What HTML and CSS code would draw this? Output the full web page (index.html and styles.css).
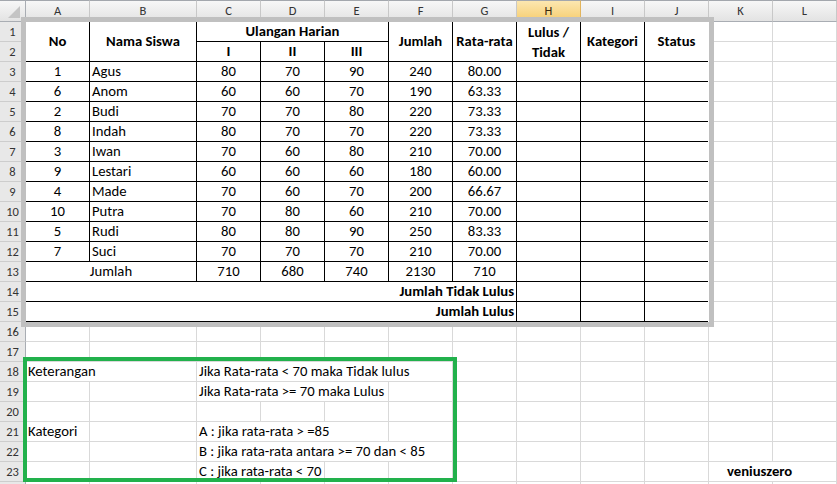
FILE: index.html
```html
<!DOCTYPE html>
<html>
<head>
<meta charset="utf-8">
<link rel="stylesheet" href="styles.css">
</head>
<body>
<div class="sheet">
  <!-- column headers -->
  <div class="ch corner"><svg width="25" height="20" viewBox="0 0 25 20"><polygon points="8,17 20,17 20,5" fill="#c4c4c4"/></svg></div>
  <div class="ch">A</div><div class="ch">B</div><div class="ch">C</div><div class="ch">D</div><div class="ch">E</div><div class="ch">F</div><div class="ch">G</div><div class="ch sel">H</div><div class="ch">I</div><div class="ch">J</div><div class="ch">K</div><div class="ch">L</div>

  <!-- embedded table picture -->
  <div class="pic">
    <div class="t b h2">No</div>
    <div class="t b h2">Nama Siswa</div>
    <div class="t b span3">Ulangan Harian</div>
    <div class="t b h2">Jumlah</div>
    <div class="t b h2">Rata-rata</div>
    <div class="t b h2 wrap">Lulus /<br>Tidak</div>
    <div class="t b h2">Kategori</div>
    <div class="t b h2 last">Status</div>
    <div class="t b">I</div><div class="t b">II</div><div class="t b">III</div>

    <div class="t">1</div><div class="t l">Agus</div><div class="t">80</div><div class="t">70</div><div class="t">90</div><div class="t">240</div><div class="t">80.00</div><div class="t"></div><div class="t"></div><div class="t last"></div>
    <div class="t">6</div><div class="t l">Anom</div><div class="t">60</div><div class="t">60</div><div class="t">70</div><div class="t">190</div><div class="t">63.33</div><div class="t"></div><div class="t"></div><div class="t last"></div>
    <div class="t">2</div><div class="t l">Budi</div><div class="t">70</div><div class="t">70</div><div class="t">80</div><div class="t">220</div><div class="t">73.33</div><div class="t"></div><div class="t"></div><div class="t last"></div>
    <div class="t">8</div><div class="t l">Indah</div><div class="t">80</div><div class="t">70</div><div class="t">70</div><div class="t">220</div><div class="t">73.33</div><div class="t"></div><div class="t"></div><div class="t last"></div>
    <div class="t">3</div><div class="t l">Iwan</div><div class="t">70</div><div class="t">60</div><div class="t">80</div><div class="t">210</div><div class="t">70.00</div><div class="t"></div><div class="t"></div><div class="t last"></div>
    <div class="t">9</div><div class="t l">Lestari</div><div class="t">60</div><div class="t">60</div><div class="t">60</div><div class="t">180</div><div class="t">60.00</div><div class="t"></div><div class="t"></div><div class="t last"></div>
    <div class="t">4</div><div class="t l">Made</div><div class="t">70</div><div class="t">60</div><div class="t">70</div><div class="t">200</div><div class="t">66.67</div><div class="t"></div><div class="t"></div><div class="t last"></div>
    <div class="t">10</div><div class="t l">Putra</div><div class="t">70</div><div class="t">80</div><div class="t">60</div><div class="t">210</div><div class="t">70.00</div><div class="t"></div><div class="t"></div><div class="t last"></div>
    <div class="t">5</div><div class="t l">Rudi</div><div class="t">80</div><div class="t">80</div><div class="t">90</div><div class="t">250</div><div class="t">83.33</div><div class="t"></div><div class="t"></div><div class="t last"></div>
    <div class="t">7</div><div class="t l">Suci</div><div class="t">70</div><div class="t">70</div><div class="t">70</div><div class="t">210</div><div class="t">70.00</div><div class="t"></div><div class="t"></div><div class="t last"></div>
    <div class="t span2">Jumlah</div><div class="t">710</div><div class="t">680</div><div class="t">740</div><div class="t">2130</div><div class="t">710</div><div class="t"></div><div class="t"></div><div class="t last"></div>
    <div class="t b r span7">Jumlah Tidak Lulus</div><div class="t"></div><div class="t"></div><div class="t last"></div>
    <div class="t b r span7">Jumlah Lulus</div><div class="t"></div><div class="t"></div><div class="t last"></div>
  </div>

  <!-- rows 1-15: row headers + K, L -->
  <div class="rh">1</div><div class="c"></div><div class="c"></div>
  <div class="rh">2</div><div class="c"></div><div class="c"></div>
  <div class="rh">3</div><div class="c"></div><div class="c"></div>
  <div class="rh">4</div><div class="c"></div><div class="c"></div>
  <div class="rh">5</div><div class="c"></div><div class="c"></div>
  <div class="rh">6</div><div class="c"></div><div class="c"></div>
  <div class="rh">7</div><div class="c"></div><div class="c"></div>
  <div class="rh">8</div><div class="c"></div><div class="c"></div>
  <div class="rh">9</div><div class="c"></div><div class="c"></div>
  <div class="rh">10</div><div class="c"></div><div class="c"></div>
  <div class="rh">11</div><div class="c"></div><div class="c"></div>
  <div class="rh">12</div><div class="c"></div><div class="c"></div>
  <div class="rh">13</div><div class="c"></div><div class="c"></div>
  <div class="rh">14</div><div class="c"></div><div class="c"></div>
  <div class="rh">15</div><div class="c"></div><div class="c"></div>

  <!-- row 16 -->
  <div class="rh">16</div><div class="c"></div><div class="c"></div><div class="c"></div><div class="c"></div><div class="c"></div><div class="c"></div><div class="c"></div><div class="c"></div><div class="c"></div><div class="c"></div><div class="c"></div><div class="c"></div>
  <!-- row 17 -->
  <div class="rh">17</div><div class="c"></div><div class="c"></div><div class="c"></div><div class="c"></div><div class="c"></div><div class="c"></div><div class="c"></div><div class="c"></div><div class="c"></div><div class="c"></div><div class="c"></div><div class="c"></div>
  <!-- row 18 -->
  <div class="rh">18</div><div class="c span2">Keterangan</div><div class="c span4">Jika Rata-rata &lt; 70 maka Tidak lulus</div><div class="c"></div><div class="c"></div><div class="c"></div><div class="c"></div><div class="c"></div><div class="c"></div>
  <!-- row 19 -->
  <div class="rh">19</div><div class="c"></div><div class="c"></div><div class="c span3">Jika Rata-rata &gt;= 70 maka Lulus</div><div class="c"></div><div class="c"></div><div class="c"></div><div class="c"></div><div class="c"></div><div class="c"></div><div class="c"></div>
  <!-- row 20 -->
  <div class="rh">20</div><div class="c"></div><div class="c"></div><div class="c"></div><div class="c"></div><div class="c"></div><div class="c"></div><div class="c"></div><div class="c"></div><div class="c"></div><div class="c"></div><div class="c"></div><div class="c"></div>
  <!-- row 21 -->
  <div class="rh">21</div><div class="c">Kategori</div><div class="c"></div><div class="c span3">A : jika rata-rata &gt; =85</div><div class="c"></div><div class="c"></div><div class="c"></div><div class="c"></div><div class="c"></div><div class="c"></div><div class="c"></div>
  <!-- row 22 -->
  <div class="rh">22</div><div class="c"></div><div class="c"></div><div class="c span4">B : jika rata-rata antara &gt;= 70 dan &lt; 85</div><div class="c"></div><div class="c"></div><div class="c"></div><div class="c"></div><div class="c"></div><div class="c"></div>
  <!-- row 23 -->
  <div class="rh">23</div><div class="c"></div><div class="c"></div><div class="c span2">C : jika rata-rata &lt; 70</div><div class="c"></div><div class="c"></div><div class="c"></div><div class="c"></div><div class="c"></div><div class="c"></div><div class="c span2 sig">veniuszero</div>
  <!-- row 24 (only its top edge is in view) -->
  <div class="rh"></div><div class="c"></div><div class="c"></div><div class="c"></div><div class="c"></div><div class="c"></div><div class="c"></div><div class="c"></div><div class="c"></div><div class="c"></div><div class="c"></div><div class="c"></div><div class="c"></div>

  <!-- drawn rectangle shape -->
  <div class="shape"></div>
</div>
</body>
</html>
```

FILE: styles.css
```css
* {
  box-sizing: border-box;
  margin: 0;
  padding: 0;
}

html, body {
  width: 837px;
  height: 484px;
  overflow: hidden;
  background: #ffffff;
}

body {
  font-family: Calibri, Carlito, Lato, "Liberation Sans", sans-serif;
  font-size: 14.7px;
  color: #000000;
}

.sheet {
  position: relative;
  display: grid;
  grid-template-columns: 26px 64px 107px repeat(10, 64px);
  grid-template-rows: 22px repeat(24, 20px);
}

/* column headers */
.ch {
  background: linear-gradient(#f7f7f7, #e3e3e3);
  border-top: 1px solid #a3a7ad;
  border-right: 1px solid #c8c8c8;
  border-bottom: 1px solid #a9adb3;
  text-align: center;
  font-size: 12.5px;
  line-height: 20px;
  color: #333333;
}

.ch.sel {
  background: linear-gradient(#fce7b0, #f6cd70);
  border-right-color: #e2b45c;
  color: #3a2a10;
}

.corner {
  background: linear-gradient(#f7f7f7, #e3e3e3);
  border-right-color: #a9adb3;
}

.corner svg {
  display: block;
}

/* row headers */
.rh {
  background: #e8e8e8;
  border-right: 1px solid #a9adb3;
  border-bottom: 1px solid #cdcdcd;
  text-align: center;
  font-size: 12.5px;
  line-height: 19px;
  color: #333333;
}

/* sheet cells */
.c {
  border-right: 1px solid #d9d9d9;
  border-bottom: 1px solid #d9d9d9;
  line-height: 19px;
  padding-left: 2px;
  white-space: nowrap;
  background: #ffffff;
}

.span2 { grid-column: span 2; }
.span3 { grid-column: span 3; }
.span4 { grid-column: span 4; }
.span7 { grid-column: span 7; }

.sig {
  font-weight: bold;
  padding-left: 18px;
}

/* embedded table picture */
.pic {
  grid-column: 2 / 12;
  grid-row: 2 / 17;
  display: grid;
  grid-template-columns: 64px 107px repeat(7, 64px) 63px;
  grid-template-rows: repeat(15, 20px);
  background: #ffffff;
  outline: 5px solid #c0c0c0;
  position: relative;
  z-index: 1;
}

.t {
  border-right: 1px solid #000000;
  border-bottom: 1px solid #000000;
  text-align: center;
  line-height: 19px;
  white-space: nowrap;
}

.t.last {
  border-right: 0;
}

.b {
  font-weight: bold;
}

.l {
  text-align: left;
  padding-left: 2px;
}

.r {
  text-align: right;
  padding-right: 2px;
}

.h2 {
  grid-row: span 2;
  line-height: 39px;
}

.h2.wrap {
  line-height: 20px;
  white-space: normal;
}

/* drawn green rectangle */
.shape {
  position: absolute;
  left: 23px;
  top: 357px;
  width: 434px;
  height: 125px;
  border: 4px solid #22b14c;
  z-index: 2;
}
```
